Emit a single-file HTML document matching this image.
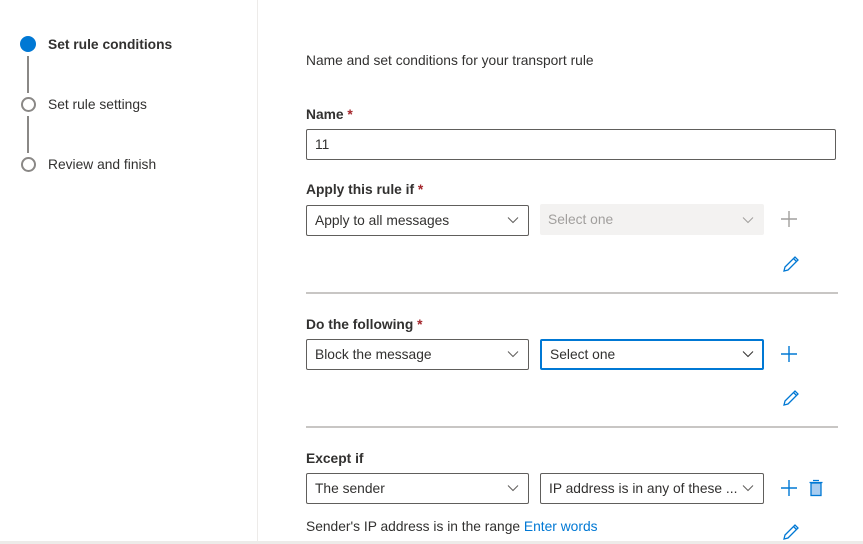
<!DOCTYPE html>
<html><head><meta charset="utf-8"><style>
*{margin:0;padding:0;box-sizing:border-box}
body{width:863px;height:544px;overflow:hidden;background:#fff;font-family:"Liberation Sans",sans-serif;font-size:13.8px;color:#323130;position:relative}
.a{position:absolute}
.side{left:257px;top:0;width:1px;height:541px;background:#edebe9}
.bot{left:0;top:541px;width:863px;height:3px;background:#edebe9}
.lbl{font-weight:bold;line-height:16px}
.req{color:#a4262c}
.dd{border:1px solid #605e5c;border-radius:2px;height:31px;line-height:29px;padding-left:8px;white-space:nowrap;overflow:hidden}
.chev{position:absolute;right:9px;top:10px}
.hr{left:306px;width:532px;height:2px;background:#c8c6c4}
</style></head><body>
<div class="a side"></div><div class="a bot"></div>
<div class="a" style="left:20px;top:36px;width:16px;height:16px;border-radius:50%;background:#0078d4"></div>
<div class="a" style="left:27px;top:56px;width:2px;height:37px;background:#8a8886"></div>
<div class="a" style="left:21px;top:97px;width:15px;height:15px;border-radius:50%;border:2px solid #8a8886"></div>
<div class="a" style="left:27px;top:116px;width:2px;height:37px;background:#8a8886"></div>
<div class="a" style="left:21px;top:157px;width:15px;height:15px;border-radius:50%;border:2px solid #8a8886"></div>
<div class="a" style="left:48px;top:37px;font-weight:bold;line-height:16px">Set rule conditions</div>
<div class="a" style="left:48px;top:97px;line-height:16px">Set rule settings</div>
<div class="a" style="left:48px;top:157px;line-height:16px">Review and finish</div>
<div class="a" style="left:306px;top:53px;line-height:16px">Name and set conditions for your transport rule</div>
<div class="a lbl" style="left:306px;top:107px">Name <span class="req">*</span></div>
<div class="a dd" style="left:306px;top:129px;width:530px;height:31px">11</div>
<div class="a lbl" style="left:306px;top:182px">Apply this rule if <span class="req">*</span></div>
<div class="a dd" style="left:306px;top:205px;width:223px">Apply to all messages<svg class="chev" width="12" height="8" viewBox="0 0 12 8"><path d="M1 1.5L6 6.5L11 1.5" fill="none" stroke="#605e5c" stroke-width="1"/></svg></div>
<div class="a dd" style="left:540px;top:204px;width:224px;border:none;background:#f3f2f1;color:#a19f9d;line-height:31px">Select one<svg class="chev" width="12" height="8" viewBox="0 0 12 8" style="top:12px;right:10px"><path d="M1 1.5L6 6.5L11 1.5" fill="none" stroke="#a19f9d" stroke-width="1"/></svg></div>
<svg class="a" style="left:780px;top:210px" width="18" height="18"><path d="M9 1V17M1 9H17" stroke="#a19f9d" stroke-width="1.4"/></svg>
<svg class="a" style="left:782px;top:255px" width="18" height="18" viewBox="0 0 18 18"><path d="M2 16L3 12L13 2L16 5L6 15Z M11.5 3.5L14.5 6.5" fill="none" stroke="#0078d4" stroke-width="1.3"/></svg>
<div class="a hr" style="top:292px"></div>
<div class="a lbl" style="left:306px;top:317px">Do the following <span class="req">*</span></div>
<div class="a dd" style="left:306px;top:339px;width:223px">Block the message<svg class="chev" width="12" height="8" viewBox="0 0 12 8"><path d="M1 1.5L6 6.5L11 1.5" fill="none" stroke="#605e5c" stroke-width="1"/></svg></div>
<div class="a dd" style="left:540px;top:339px;width:224px;border:2px solid #0078d4;line-height:27px">Select one<svg class="chev" width="12" height="8" viewBox="0 0 12 8" style="top:9px;right:8px"><path d="M1 1.5L6 6.5L11 1.5" fill="none" stroke="#323130" stroke-width="1"/></svg></div>
<svg class="a" style="left:780px;top:345px" width="18" height="18"><path d="M9 1V17M1 9H17" stroke="#0078d4" stroke-width="1.4"/></svg>
<svg class="a" style="left:782px;top:389px" width="18" height="18" viewBox="0 0 18 18"><path d="M2 16L3 12L13 2L16 5L6 15Z M11.5 3.5L14.5 6.5" fill="none" stroke="#0078d4" stroke-width="1.3"/></svg>
<div class="a hr" style="top:426px"></div>
<div class="a lbl" style="left:306px;top:451px">Except if</div>
<div class="a dd" style="left:306px;top:473px;width:223px">The sender<svg class="chev" width="12" height="8" viewBox="0 0 12 8"><path d="M1 1.5L6 6.5L11 1.5" fill="none" stroke="#605e5c" stroke-width="1"/></svg></div>
<div class="a dd" style="left:540px;top:473px;width:224px">IP address is in any of these ...<svg class="chev" width="12" height="8" viewBox="0 0 12 8" style="background:#fff"><path d="M1 1.5L6 6.5L11 1.5" fill="none" stroke="#605e5c" stroke-width="1"/></svg></div>
<svg class="a" style="left:780px;top:479px" width="18" height="18"><path d="M9 1V17M1 9H17" stroke="#0078d4" stroke-width="1.4"/></svg>
<svg class="a" style="left:808px;top:479px" width="16" height="18" viewBox="0 0 16 18"><path d="M5 1.5H11M1.5 3.5H14.5" stroke="#0078d4" stroke-width="1.3"/><rect x="3" y="4" width="10" height="12.5" fill="#a9cdf0" stroke="#0078d4" stroke-width="1.3"/></svg>
<div class="a" style="left:306px;top:519px;line-height:16px">Sender's IP address is in the range <span style="color:#0078d4">Enter words</span></div>
<svg class="a" style="left:782px;top:523px" width="18" height="18" viewBox="0 0 18 18"><path d="M2 16L3 12L13 2L16 5L6 15Z M11.5 3.5L14.5 6.5" fill="none" stroke="#0078d4" stroke-width="1.3"/></svg>
</body></html>
